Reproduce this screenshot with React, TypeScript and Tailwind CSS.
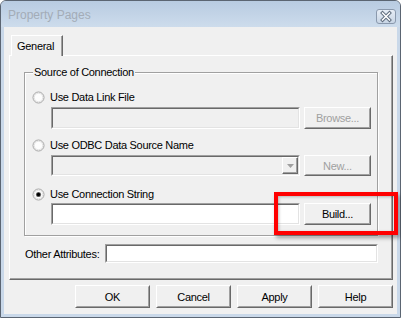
import React from 'react'

function Sunken({ className = '', white = false, children }: { className?: string; white?: boolean; children?: React.ReactNode }) {
  return (
    <div className={`border border-t-[#a0a0a0] border-l-[#a0a0a0] border-r-white border-b-white ${className}`}>
      <div
        className={`flex h-full w-full justify-end border border-t-[#696969] border-l-[#696969] border-r-[#e3e3e3] border-b-[#e3e3e3] ${
          white ? 'bg-white' : 'bg-[#f0f0f0]'
        }`}
      >
        {children}
      </div>
    </div>
  )
}

function Button({ label, className = '', disabled = false }: { label: string; className?: string; disabled?: boolean }) {
  return (
    <div className={`flex border border-t-white border-l-white border-r-[#696969] border-b-[#696969] bg-[#f0f0f0] ${className}`}>
      <div
        className={`flex flex-1 items-center justify-center border border-t-[#f0f0f0] border-l-[#f0f0f0] border-r-[#a0a0a0] border-b-[#a0a0a0] ${
          disabled ? 'text-[#a0a0a0]' : 'text-black'
        }`}
      >
        {label}
      </div>
    </div>
  )
}

function Radio({ checked = false }: { checked?: boolean }) {
  return (
    <svg width="13" height="13" viewBox="0 0 13 13" className="shrink-0">
      <circle cx="6.5" cy="6.5" r="5.5" fill="#fdfdfd" stroke="#a2a2a2" />
      <circle cx="6.5" cy="6.5" r="4.3" fill="none" stroke="#e2e2e2" />
      {checked && (
        <>
          <circle cx="6.5" cy="6.5" r="2.6" fill="#6a6a6a" />
          <circle cx="6.5" cy="6.5" r="1.7" fill="#000" />
        </>
      )}
    </svg>
  )
}

function RadioRow({ label, checked = false, className = '' }: { label: string; checked?: boolean; className?: string }) {
  return (
    <div className={`ml-[7px] flex h-[14px] items-center gap-[5px] ${className}`}>
      <Radio checked={checked} />
      <span>{label}</span>
    </div>
  )
}

function CloseButton() {
  return (
    <svg width="20" height="15" viewBox="0 0 20 15" className="mt-[8px] shrink-0">
      <defs>
        <linearGradient id="cb" x1="0" y1="0" x2="0" y2="1">
          <stop offset="0" stopColor="#e8eef6" />
          <stop offset="1" stopColor="#c6d4e4" />
        </linearGradient>
      </defs>
      <rect x="0.5" y="0.5" width="19" height="14" rx="2.5" fill="url(#cb)" stroke="#8a99ad" />
      <path d="M6.5 4 L13.5 11 M13.5 4 L6.5 11" stroke="#5f6d7e" strokeWidth="3.4" strokeLinecap="square" />
      <path d="M6.5 4 L13.5 11 M13.5 4 L6.5 11" stroke="#ffffff" strokeWidth="1.5" strokeLinecap="square" />
    </svg>
  )
}

export default function App() {
  return (
    <div className="relative h-[318px] w-[401px] bg-white font-['Liberation_Sans',Arial,sans-serif] text-[11px] leading-[14px] tracking-[-0.3px] text-black">
      <div className="flex h-full w-full flex-col overflow-hidden rounded-t-[6px] border border-[#5b6572] bg-[#c9d8e9]">
        {/* title bar */}
        <div className="flex h-[26px] shrink-0 items-start justify-between bg-linear-to-b from-[#b8cbe1] to-[#cddcec] pl-[7px] pr-[4px]">
          <span className="pt-[7px] text-[12px] leading-[14px] tracking-normal text-[#a3acb7]">Property Pages</span>
          <CloseButton />
        </div>

        <div className="flex flex-1 flex-col px-[3px] pb-[3px]">
          <div className="flex flex-1 flex-col bg-[#f0f0f0] pl-[5px] pr-[4px] pt-[8px]">
            {/* tab */}
            <div className="relative z-10 -mb-px ml-[2px] h-[21px] w-[52px] border-l border-r border-t border-l-white border-r-[#696969] border-t-white bg-[#f0f0f0] pl-[5px] pt-[3px] shadow-[inset_-1px_0_0_#a0a0a0]">
              General
            </div>

            {/* tab panel */}
            <div className="h-[225px] w-[384px] border border-t-white border-l-white border-r-[#696969] border-b-[#696969] pl-[14px] pt-[16px] shadow-[inset_-1px_-1px_0_#a0a0a0]">
              <div className="flex h-[164px] w-[354px] flex-col border border-[#a0a0a0] shadow-[inset_1px_1px_0_#fff,1px_1px_0_#fff]">
                <div className="-mt-[8px] ml-[8px] h-[14px] w-fit bg-[#f0f0f0] px-[1px]">Source of Connection</div>

                <RadioRow label="Use Data Link File" className="mt-[11px]" />
                <div className="ml-[26px] mt-[3px] flex gap-[4px]">
                  <Sunken className="h-[22px] w-[249px]" />
                  <Button label="Browse..." disabled className="h-[22px] w-[67px]" />
                </div>

                <RadioRow label="Use ODBC Data Source Name" className="mt-[9px]" />
                <div className="ml-[26px] mt-[3px] flex gap-[4px]">
                  <Sunken className="h-[21px] w-[249px]">
                    <div className="flex h-full w-[16px] items-center justify-center border border-t-white border-l-white border-r-[#696969] border-b-[#696969] shadow-[inset_-1px_-1px_0_#a0a0a0]">
                      <svg width="7" height="4" viewBox="0 0 7 4">
                        <path d="M0 0 H7 L3.5 4 Z" fill="#a0a0a0" />
                      </svg>
                    </div>
                  </Sunken>
                  <Button label="New..." disabled className="h-[21px] w-[67px]" />
                </div>

                <RadioRow label="Use Connection String" checked className="mt-[11px]" />
                <div className="ml-[26px] mt-[2px] flex gap-[4px]">
                  <Sunken white className="h-[22px] w-[249px]" />
                  <Button label="Build..." className="h-[22px] w-[67px]" />
                </div>
              </div>

              <div className="mt-[8px] flex items-center">
                <span className="ml-[1px] w-[80px]">Other Attributes:</span>
                <Sunken white className="h-[19px] w-[273px]" />
              </div>
            </div>

            {/* dialog buttons */}
            <div className="mt-[5px] flex justify-end gap-[6px]">
              <Button label="OK" className="h-[23px] w-[75px]" />
              <Button label="Cancel" className="h-[23px] w-[75px]" />
              <Button label="Apply" className="h-[23px] w-[75px]" />
              <Button label="Help" className="h-[23px] w-[75px]" />
            </div>
          </div>
        </div>
      </div>

      {/* red highlight annotation */}
      <div className="absolute left-[274px] top-[192px] h-[43px] w-[124px] border-4 border-[#ff0000] shadow-[2px_3px_4px_rgba(0,0,0,0.35),inset_1px_1px_3px_rgba(0,0,0,0.25)]" />
    </div>
  )
}
